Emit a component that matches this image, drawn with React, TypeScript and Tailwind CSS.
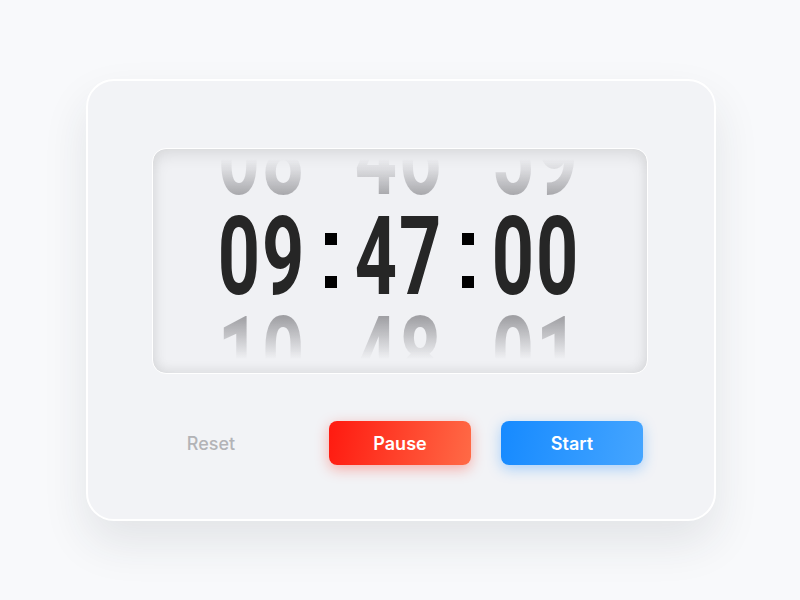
import React from "react";

const rows = {
  prev: ["08", "46", "59"],
  now: ["09", "47", "00"],
  next: ["10", "48", "01"],
};

const digitFont = { fontFamily: "Roboto, 'Liberation Sans', sans-serif" };
const uiFont = { fontFamily: "Inter, 'Open Sans', sans-serif" };

function Digits({ value, tone }: { value: string; tone: "prev" | "now" | "next" }) {
  const toneClass =
    tone === "now"
      ? "text-[#262626]"
      : tone === "prev"
      ? "text-transparent bg-clip-text bg-[linear-gradient(to_bottom,transparent_52%,#a4a4a8_90%)]"
      : "text-transparent bg-clip-text bg-[linear-gradient(to_bottom,#a0a0a4_10%,transparent_52%)]";
  return (
    <div className="w-[84px] h-[100px] flex justify-center">
      <span
        style={digitFont}
        className={`inline-block text-[110px] leading-[100px] font-bold tracking-[3px] scale-x-[0.67] ${toneClass}`}
      >
        {value}
      </span>
    </div>
  );
}

function Colon({ show }: { show: boolean }) {
  return (
    <div className="w-[53px] h-[100px] flex flex-col items-center pt-[26px] gap-[31px]">
      {show && (
        <>
          <div className="w-[12px] h-[12px] bg-black" />
          <div className="w-[12px] h-[12px] bg-black" />
        </>
      )}
    </div>
  );
}

function Row({ tone }: { tone: "prev" | "now" | "next" }) {
  const [h, m, s] = rows[tone];
  return (
    <div className="flex items-start">
      <Digits value={h} tone={tone} />
      <Colon show={tone === "now"} />
      <Digits value={m} tone={tone} />
      <Colon show={tone === "now"} />
      <Digits value={s} tone={tone} />
    </div>
  );
}

export default function App() {
  return (
    <div className="w-[800px] h-[600px] bg-[#f8f9fb] flex items-center justify-center">
      <div className="w-[630px] h-[442px] ml-[2px] rounded-[28px] bg-[#f2f3f6] border-2 border-white shadow-[0_22px_45px_rgba(40,45,60,0.1)] flex flex-col px-[64px] pt-[67px]">
        <div className="w-[496px] h-[226px] rounded-[14px] bg-[#f0f1f4] border border-white overflow-hidden relative">
          <div className="flex flex-col items-center mt-[-42px] ml-[-1px]">
            <Row tone="prev" />
            <Row tone="now" />
            <Row tone="next" />
          </div>
          <div className="absolute inset-0 rounded-[13px] pointer-events-none shadow-[inset_0_6px_16px_rgba(0,0,0,0.09),inset_0_-4px_12px_rgba(0,0,0,0.06)]" />
        </div>

        <div className="mt-[47px] flex items-center pr-[5px]" style={uiFont}>
          <div className="w-[118px] text-center text-[18px] font-medium text-[#b3b3b7]">Reset</div>
          <button className="ml-[59px] w-[142px] h-[44px] rounded-[8px] text-white text-[18px] font-semibold bg-[linear-gradient(100deg,#ff1a10,#ff6a46)] shadow-[0_4px_14px_rgba(255,40,20,0.35)]">
            Pause
          </button>
          <button className="ml-[30px] w-[142px] h-[44px] rounded-[8px] text-white text-[18px] font-semibold bg-[linear-gradient(100deg,#168aff,#45a5ff)] shadow-[0_4px_14px_rgba(30,140,255,0.35)]">
            Start
          </button>
        </div>
      </div>
    </div>
  );
}
